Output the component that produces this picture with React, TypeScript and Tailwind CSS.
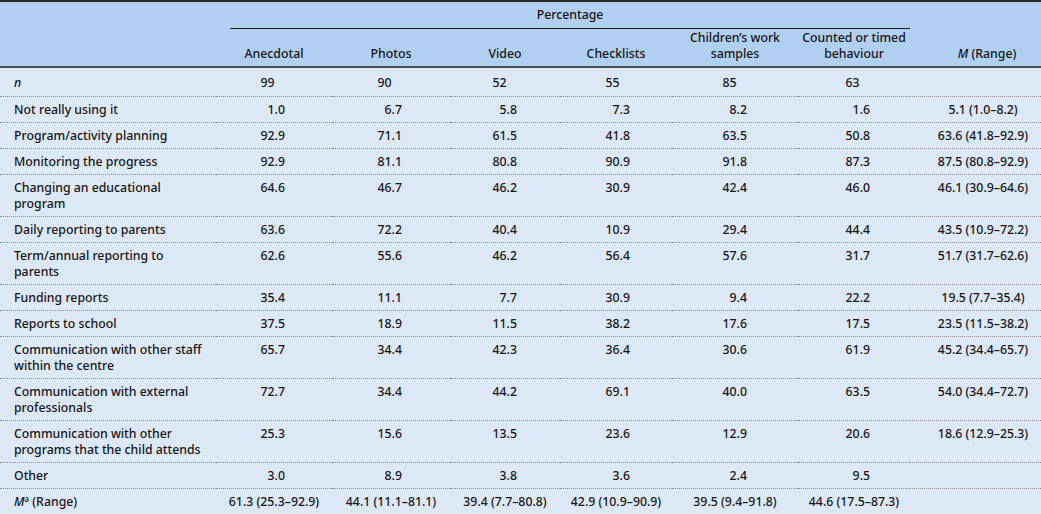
import React from 'react';

type Row = {
  label: React.ReactNode;
  values: string[];
  mean?: string;
  tall?: boolean;
};

const rows: Row[] = [
  { label: 'Not really using it', values: ['1.0', '6.7', '5.8', '7.3', '8.2', '1.6'], mean: '5.1 (1.0–8.2)' },
  { label: 'Program/activity planning', values: ['92.9', '71.1', '61.5', '41.8', '63.5', '50.8'], mean: '63.6 (41.8–92.9)' },
  { label: 'Monitoring the progress', values: ['92.9', '81.1', '80.8', '90.9', '91.8', '87.3'], mean: '87.5 (80.8–92.9)' },
  { label: <>Changing an educational<br />program</>, values: ['64.6', '46.7', '46.2', '30.9', '42.4', '46.0'], mean: '46.1 (30.9–64.6)', tall: true },
  { label: 'Daily reporting to parents', values: ['63.6', '72.2', '40.4', '10.9', '29.4', '44.4'], mean: '43.5 (10.9–72.2)' },
  { label: <>Term/annual reporting to<br />parents</>, values: ['62.6', '55.6', '46.2', '56.4', '57.6', '31.7'], mean: '51.7 (31.7–62.6)', tall: true },
  { label: 'Funding reports', values: ['35.4', '11.1', '7.7', '30.9', '9.4', '22.2'], mean: '19.5 (7.7–35.4)' },
  { label: 'Reports to school', values: ['37.5', '18.9', '11.5', '38.2', '17.6', '17.5'], mean: '23.5 (11.5–38.2)' },
  { label: <>Communication with other staff<br />within the centre</>, values: ['65.7', '34.4', '42.3', '36.4', '30.6', '61.9'], mean: '45.2 (34.4–65.7)', tall: true },
  { label: <>Communication with external<br />professionals</>, values: ['72.7', '34.4', '44.2', '69.1', '40.0', '63.5'], mean: '54.0 (34.4–72.7)', tall: true },
  { label: <>Communication with other<br />programs that the child attends</>, values: ['25.3', '15.6', '13.5', '23.6', '12.9', '20.6'], mean: '18.6 (12.9–25.3)', tall: true },
  { label: 'Other', values: ['3.0', '8.9', '3.8', '3.6', '2.4', '9.5'] },
];

const nRow = ['99', '90', '52', '55', '85', '63'];
const meanRow = ['61.3 (25.3–92.9)', '44.1 (11.1–81.1)', '39.4 (7.7–80.8)', '42.9 (10.9–90.9)', '39.5 (9.4–91.8)', '44.6 (17.5–87.3)'];

// right padding so decimals line up under each header
const numPad = ['pr-[47px]', 'pr-[48px]', 'pr-[43px]', 'pr-[42px]', 'pr-[51px]', 'pr-[40px]'];

const headers: React.ReactNode[] = [
  'Anecdotal',
  'Photos',
  'Video',
  'Checklists',
  <>Children’s work<br />samples</>,
  <>Counted or timed<br />behaviour</>,
];

const cell = 'pt-[5px] pb-[4px] align-top border-b border-dotted border-[#8c8c8c]';

export default function App() {
  return (
    <div
      className="w-[1041px] h-[514px] bg-[#dde8f7] text-[#161616] text-[12.3px] leading-[16px] font-medium"
      style={{ fontFamily: '"Noto Sans", "Open Sans", sans-serif' }}
    >
      <table className="w-full table-fixed border-collapse">
        <colgroup>
          <col className="w-[216px]" />
          <col className="w-[116px]" />
          <col className="w-[118px]" />
          <col className="w-[110px]" />
          <col className="w-[112px]" />
          <col className="w-[126px]" />
          <col className="w-[112px]" />
          <col className="w-[131px]" />
        </colgroup>
        <thead className="bg-[#b1cff1]">
          <tr className="border-t-2 border-[#2a2a2a]">
            <th />
            <th colSpan={6} className="pl-[14px] pt-[5px] font-medium">
              <div className="border-b border-[#1a1a1a] pb-[5px] text-center">Percentage</div>
            </th>
            <th />
          </tr>
          <tr className="border-b-2 border-[#4d4d4d]">
            <th className="h-[38px]" />
            {headers.map((h, i) => (
              <th key={i} className="align-bottom pb-[4px] text-center font-medium">
                {h}
              </th>
            ))}
            <th className="align-bottom pb-[4px] pl-[23px] text-center font-medium">
              <i>M</i> (Range)
            </th>
          </tr>
        </thead>
        <tbody>
          <tr>
            <td className={`${cell} pl-[14px] pt-[7px] pb-[5px]`}>
              <i>n</i>
            </td>
            {nRow.map((v, i) => (
              <td key={i} className={`${cell} pt-[7px] pb-[5px] text-right ${numPad[i]}`}>
                {v}
                <span className="invisible">.0</span>
              </td>
            ))}
            <td className={cell} />
          </tr>
          {rows.map((r, ri) => (
            <tr key={ri}>
              <td className={`${cell} pl-[14px] ${r.tall ? 'h-[42px]' : 'h-[26px]'}`}>{r.label}</td>
              {r.values.map((v, i) => (
                <td key={i} className={`${cell} text-right ${numPad[i]}`}>
                  {v}
                </td>
              ))}
              <td className={`${cell} pl-[15px] text-center`}>{r.mean}</td>
            </tr>
          ))}
          <tr className="border-b-2 border-[#2a2a2a]">
            <td className="pl-[14px] pt-[5px] pb-[4px]">
              <i>M</i>
              <sup className="text-[8px]">a</sup> (Range)
            </td>
            {meanRow.map((v, i) => (
              <td key={i} className="pt-[5px] pb-[4px] text-center">
                {v}
              </td>
            ))}
            <td />
          </tr>
        </tbody>
      </table>
    </div>
  );
}
